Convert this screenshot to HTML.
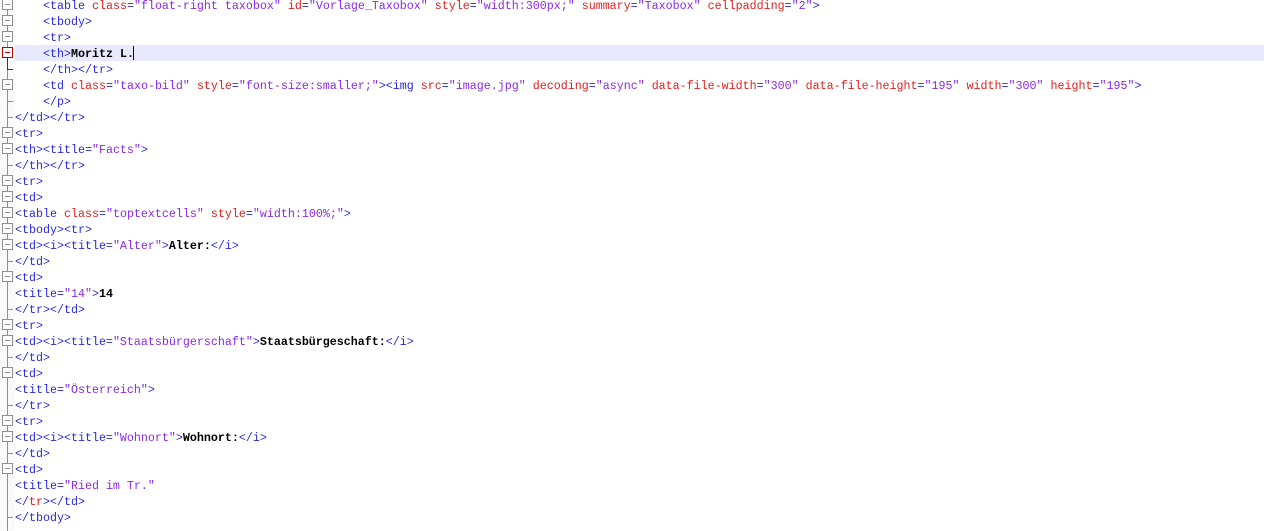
<!DOCTYPE html><html><head><style>
body{margin:0;width:1264px;height:531px;background:#fff;overflow:hidden;position:relative;font-family:"Liberation Mono",monospace;font-size:11.67px}
.l{position:absolute;left:15px;height:16px;line-height:16px;white-space:pre;color:#2a2ad8}
.i{left:43px}
.a{color:#e02020}.v{color:#8a2be0}.t{color:#000;font-weight:bold}
.hl{position:absolute;left:15px;right:0;top:45px;height:16px;background:#e8e8ff}
.mg{position:absolute;left:0;top:0;width:15px;height:531px;background:repeating-linear-gradient(45deg,#fff 0 1px,#f4f4f4 1px 2px)}
.b{position:absolute;left:2px;width:9px;height:9px;border:1px solid #909090;background:#fff}
.b:after{content:"";position:absolute;left:2px;top:4px;width:5px;height:1px;background:#909090}
.r{border-color:#c00000}.r:after{background:#c00000}
.vl{position:absolute;left:7px;width:1px;background:#909090}
.e{position:absolute;left:7px;width:6px;height:1px;background:#909090}
.cur{position:absolute;left:133px;top:46px;width:1px;height:14px;background:#000}
</style></head><body>
<div class="mg"></div><div class="hl"></div>
<div class="vl" style="top:0;height:531px"></div>
<div class="vl" style="top:58px;height:12px;background:#c00000"></div>
<div class="e" style="top:69px;background:#c00000"></div>
<div class="b" style="top:-1px"></div>
<div class="b" style="top:15px"></div>
<div class="b" style="top:31px"></div>
<div class="b r" style="top:47px"></div>
<div class="b" style="top:79px"></div>
<div class="e" style="top:101px"></div>
<div class="e" style="top:117px"></div>
<div class="b" style="top:127px"></div>
<div class="b" style="top:143px"></div>
<div class="e" style="top:165px"></div>
<div class="b" style="top:175px"></div>
<div class="b" style="top:191px"></div>
<div class="b" style="top:207px"></div>
<div class="b" style="top:223px"></div>
<div class="b" style="top:239px"></div>
<div class="e" style="top:261px"></div>
<div class="b" style="top:271px"></div>
<div class="e" style="top:309px"></div>
<div class="b" style="top:319px"></div>
<div class="b" style="top:335px"></div>
<div class="e" style="top:357px"></div>
<div class="b" style="top:367px"></div>
<div class="e" style="top:405px"></div>
<div class="b" style="top:415px"></div>
<div class="b" style="top:431px"></div>
<div class="e" style="top:453px"></div>
<div class="b" style="top:463px"></div>
<div class="e" style="top:517px"></div>
<div class="cur"></div>
<div class="l i" style="top:-2px">&lt;table <span class="a">class</span>=<span class="v">"float-right taxobox"</span> <span class="a">id</span>=<span class="v">"Vorlage_Taxobox"</span> <span class="a">style</span>=<span class="v">"width:300px;"</span> <span class="a">summary</span>=<span class="v">"Taxobox"</span> <span class="a">cellpadding</span>=<span class="v">"2"</span>&gt;</div>
<div class="l i" style="top:14px">&lt;tbody&gt;</div>
<div class="l i" style="top:30px">&lt;tr&gt;</div>
<div class="l i" style="top:46px">&lt;th&gt;<span class="t">Moritz L.</span></div>
<div class="l i" style="top:62px">&lt;/th&gt;&lt;/tr&gt;</div>
<div class="l i" style="top:78px">&lt;td <span class="a">class</span>=<span class="v">"taxo-bild"</span> <span class="a">style</span>=<span class="v">"font-size:smaller;"</span>&gt;&lt;img <span class="a">src</span>=<span class="v">"image.jpg"</span> <span class="a">decoding</span>=<span class="v">"async"</span> <span class="a">data-file-width</span>=<span class="v">"300"</span> <span class="a">data-file-height</span>=<span class="v">"195"</span> <span class="a">width</span>=<span class="v">"300"</span> <span class="a">height</span>=<span class="v">"195"</span>&gt;</div>
<div class="l i" style="top:94px">&lt;/p&gt;</div>
<div class="l" style="top:110px">&lt;/td&gt;&lt;/tr&gt;</div>
<div class="l" style="top:126px">&lt;tr&gt;</div>
<div class="l" style="top:142px">&lt;th&gt;&lt;title=<span class="v">"Facts"</span>&gt;</div>
<div class="l" style="top:158px">&lt;/th&gt;&lt;/tr&gt;</div>
<div class="l" style="top:174px">&lt;tr&gt;</div>
<div class="l" style="top:190px">&lt;td&gt;</div>
<div class="l" style="top:206px">&lt;table <span class="a">class</span>=<span class="v">"toptextcells"</span> <span class="a">style</span>=<span class="v">"width:100%;"</span>&gt;</div>
<div class="l" style="top:222px">&lt;tbody&gt;&lt;tr&gt;</div>
<div class="l" style="top:238px">&lt;td&gt;&lt;i&gt;&lt;title=<span class="v">"Alter"</span>&gt;<span class="t">Alter:</span>&lt;/i&gt;</div>
<div class="l" style="top:254px">&lt;/td&gt;</div>
<div class="l" style="top:270px">&lt;td&gt;</div>
<div class="l" style="top:286px">&lt;title=<span class="v">"14"</span>&gt;<span class="t">14</span></div>
<div class="l" style="top:302px">&lt;/tr&gt;&lt;/td&gt;</div>
<div class="l" style="top:318px">&lt;tr&gt;</div>
<div class="l" style="top:334px">&lt;td&gt;&lt;i&gt;&lt;title=<span class="v">"Staatsbürgerschaft"</span>&gt;<span class="t">Staatsbürgeschaft:</span>&lt;/i&gt;</div>
<div class="l" style="top:350px">&lt;/td&gt;</div>
<div class="l" style="top:366px">&lt;td&gt;</div>
<div class="l" style="top:382px">&lt;title=<span class="v">"Österreich"</span>&gt;</div>
<div class="l" style="top:398px">&lt;/tr&gt;</div>
<div class="l" style="top:414px">&lt;tr&gt;</div>
<div class="l" style="top:430px">&lt;td&gt;&lt;i&gt;&lt;title=<span class="v">"Wohnort"</span>&gt;<span class="t">Wohnort:</span>&lt;/i&gt;</div>
<div class="l" style="top:446px">&lt;/td&gt;</div>
<div class="l" style="top:462px">&lt;td&gt;</div>
<div class="l" style="top:478px">&lt;title=<span class="v">"Ried im Tr."</span></div>
<div class="l" style="top:494px">&lt;/<span class="a">tr</span>&gt;&lt;/td&gt;</div>
<div class="l" style="top:510px">&lt;/tbody&gt;</div>
</body></html>
